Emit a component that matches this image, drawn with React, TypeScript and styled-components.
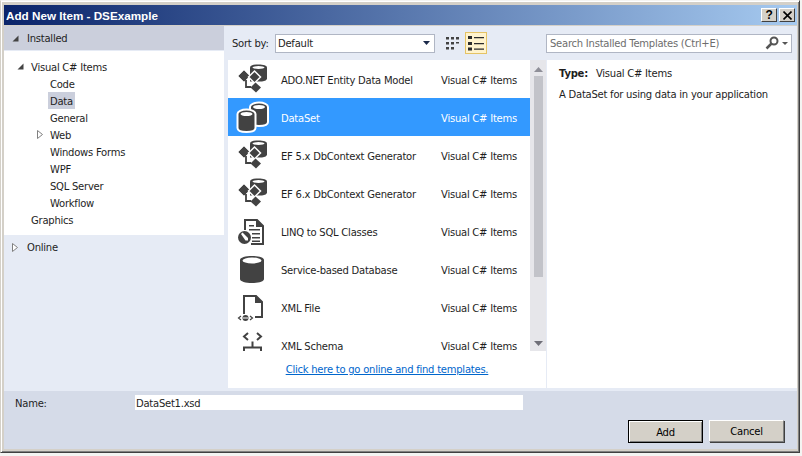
import { createGlobalStyle } from 'styled-components';
import styled from 'styled-components';

const GlobalStyle = createGlobalStyle`
  html, body {
    margin: 0;
    padding: 0;
    background: #f4f4f2;
  }
`;

const UI_FONT = `"DejaVu Sans", "Noto Sans", sans-serif`;

const ink = '#424242';

function EntityIcon() {
  return (
    <svg width="34" height="30" viewBox="-2 0 34 30">
      <path d="M12 3.500c0-2 3.500-3 8.500-3s8.500 1 8.500 3v11c0 1.500-2 2.500-5 3H12z" fill={ink} />
      <ellipse cx="20.500" cy="3.500" rx="6" ry="1.500" fill="#fff" />
      <path d="M6 6l6 6-6 6-6-6z" fill={ink} stroke="#fff" strokeWidth="0.600" />
      <path d="M8 16v7h5" fill="none" stroke={ink} strokeWidth="1.800" />
      <path d="M16.500 7l6 6-6 6-6-6z" fill={ink} stroke="#fff" strokeWidth="1.500" />
      <path d="M17.500 18.500l5.500 5-5 5-5.500-5z" fill={ink} />
    </svg>
  );
}

function DatabaseIcon() {
  return (
    <svg width="34" height="30" viewBox="-2 0 34 30">
      <path d="M2 6c0-2.500 5.500-4 12-4s12 1.500 12 4v19c0 2.500-5.500 4-12 4s-12-1.500-12-4z" fill={ink} />
      <ellipse cx="14" cy="6.500" rx="9.500" ry="3" fill="#fff" />
    </svg>
  );
}

function DataSetIcon() {
  return (
    <svg width="34" height="32" viewBox="0 0 34 32">
      <path d="M14 6c0-2.500 4-4.500 9-4.500s9 2 9 4.500v15c0 2.500-4 4-9 4s-9-1.500-9-4z" fill={ink} stroke="#fff" strokeWidth="2" />
      <ellipse cx="23" cy="6" rx="6" ry="2" fill="#fff" />
      <path d="M1.500 13c0-2.500 4-4.500 9-4.500s9 2 9 4.500v14c0 2.500-4 4-9 4s-9-1.500-9-4z" fill={ink} stroke="#fff" strokeWidth="2" />
      <ellipse cx="10.500" cy="13" rx="6" ry="2" fill="#fff" />
    </svg>
  );
}

function LinqIcon() {
  return (
    <svg width="34" height="30" viewBox="-2 0 34 30">
      <path d="M7 14V4h12l6 6v18H13" fill="none" stroke={ink} strokeWidth="2" />
      <path d="M18 3v8h8z" fill={ink} />
      <path d="M11 9h5v1.500h-5zM11 13h11v1.500H11zM14 17h8v1.500h-8zM14 21h8v1.500h-8zM14 24.500h8V26h-8z" fill={ink} />
      <circle cx="6.500" cy="21.500" r="6.500" fill={ink} />
      <path d="M3 18l1.500-1.500 5.500 5.500 0 2.500-2.500 0z" fill="#fff" />
    </svg>
  );
}

function XmlFileIcon() {
  return (
    <svg width="34" height="30" viewBox="-2 0 34 30">
      <path d="M6 22V4h12l6 6v15h-7" fill="none" stroke={ink} strokeWidth="2" />
      <path d="M17 3v8h8z" fill={ink} />
      <circle cx="7.500" cy="26" r="3" fill={ink} />
      <path d="M5 26h5" stroke="#fff" strokeWidth="1" />
      <path d="M3 24l-2.500 2L3 28M12 24l2.500 2-2.500 2" fill="none" stroke={ink} strokeWidth="1.200" />
    </svg>
  );
}

function XmlSchemaIcon() {
  return (
    <svg width="34" height="30" viewBox="-2 0 34 30">
      <path d="M10 3L6 6.500l4 3.500M19 3l4 3.500-4 3.500" fill="none" stroke={ink} strokeWidth="2" />
      <path d="M14.500 11.500v6M6 21v-3.500h17V21" fill="none" stroke={ink} strokeWidth="2" />
    </svg>
  );
}

const items = [
  { name: 'ADO.NET Entity Data Model', icon: <EntityIcon /> },
  { name: 'DataSet', icon: <DataSetIcon />, selected: true },
  { name: 'EF 5.x DbContext Generator', icon: <EntityIcon /> },
  { name: 'EF 6.x DbContext Generator', icon: <EntityIcon /> },
  { name: 'LINQ to SQL Classes', icon: <LinqIcon /> },
  { name: 'Service-based Database', icon: <DatabaseIcon /> },
  { name: 'XML File', icon: <XmlFileIcon /> },
  { name: 'XML Schema', icon: <XmlSchemaIcon /> },
];

const tree = [
  { label: 'Visual C# Items', depth: 0, arrow: 'open' },
  { label: 'Code', depth: 1 },
  { label: 'Data', depth: 1, active: true },
  { label: 'General', depth: 1 },
  { label: 'Web', depth: 1, arrow: 'closed' },
  { label: 'Windows Forms', depth: 1 },
  { label: 'WPF', depth: 1 },
  { label: 'SQL Server', depth: 1 },
  { label: 'Workflow', depth: 1 },
  { label: 'Graphics', depth: 0 },
];

function Arrow({ open }: { open: boolean }) {
  return open ? (
    <svg width="7" height="7" viewBox="0 0 7 7">
      <path d="M6.500 0.500v6h-6z" fill="#444" />
    </svg>
  ) : (
    <svg width="6" height="9" viewBox="0 0 6 9">
      <path d="M0.500 0.500l5 4-5 4z" fill="#fff" stroke="#808080" />
    </svg>
  );
}

export default function App() {
  return (
    <>
      <GlobalStyle />
      <Window>
        <TitleBar>
          <TitleText>Add New Item - DSExample</TitleText>
          <TitleButtons>
            <CaptionButton>?</CaptionButton>
            <CaptionButton>
              <svg width="9" height="9" viewBox="0 0 9 9">
                <path d="M0.500 0.500l8 8M8.500 0.500l-8 8" stroke="#000" strokeWidth="1.600" />
              </svg>
            </CaptionButton>
          </TitleButtons>
        </TitleBar>
        <Main>
          <LeftPanel>
            <SectionHeader $active>
              <ArrowSlot><Arrow open /></ArrowSlot>
              Installed
            </SectionHeader>
            <Tree>
              {tree.map((row) => (
                <TreeRow key={row.label} $depth={row.depth}>
                  <ArrowSlot>{row.arrow && <Arrow open={row.arrow === 'open'} />}</ArrowSlot>
                  <TreeLabel $active={row.active}>{row.label}</TreeLabel>
                </TreeRow>
              ))}
            </Tree>
            <SectionHeader>
              <ArrowSlot><Arrow open={false} /></ArrowSlot>
              Online
            </SectionHeader>
          </LeftPanel>
          <CenterPanel>
            <Toolbar>
              <SortLabel>Sort by:</SortLabel>
              <SortSelect>
                Default
                <svg width="7" height="4" viewBox="0 0 7 4">
                  <path d="M0 0h7L3.500 4z" fill="#1b2a4a" />
                </svg>
              </SortSelect>
              <ViewButton>
                <svg width="16" height="16" viewBox="0 0 16 16">
                  <path d="M1 2h3v2.500H1zM6 2h3v2.500H6zM11 2h3v2.500h-3zM1 7h3v2.500H1zM6 7h3v2.500H6zM11 7h3v1.500h-3zM1 12h3v2.500H1zM6 12h3v2.500H6z" fill={ink} />
                </svg>
              </ViewButton>
              <ViewButton $on>
                <svg width="18" height="16" viewBox="0 0 18 16">
                  <path d="M1 1h4v3H1zM1 7h4v3H1zM1 12.500h4v3H1zM7 2h10v1.200H7zM7 8h10v1.200H7zM7 13.500h10v1.200H7z" fill="#2b2b2b" />
                </svg>
              </ViewButton>
            </Toolbar>
            <ListArea>
              <ListScroller>
                <List>
                  {items.map((item) => (
                    <ItemRow key={item.name} $selected={item.selected}>
                      <ItemIcon>{item.icon}</ItemIcon>
                      <ItemName>{item.name}</ItemName>
                      <ItemType>Visual C# Items</ItemType>
                    </ItemRow>
                  ))}
                </List>
                <ScrollBar>
                  <svg width="9" height="5" viewBox="0 0 9 5">
                    <path d="M4.500 0l4.500 5H0z" fill="#8f8f98" />
                  </svg>
                  <ScrollThumb />
                  <svg width="9" height="5" viewBox="0 0 9 5">
                    <path d="M0 0h9L4.500 5z" fill="#6f6f78" />
                  </svg>
                </ScrollBar>
              </ListScroller>
              <OnlineLinkRow>
                <OnlineLink href="#">Click here to go online and find templates.</OnlineLink>
              </OnlineLinkRow>
            </ListArea>
          </CenterPanel>
          <RightPanel>
            <SearchRow>
              <SearchBox>
                <SearchText>Search Installed Templates (Ctrl+E)</SearchText>
                <svg width="14" height="14" viewBox="0 0 14 14">
                  <circle cx="9" cy="5" r="3.500" fill="none" stroke="#555" strokeWidth="2" />
                  <path d="M6.500 7.500L1.500 12.500" stroke="#555" strokeWidth="2.500" />
                </svg>
                <svg width="6" height="3" viewBox="0 0 6 3">
                  <path d="M0 0h6L3 3z" fill="#555" />
                </svg>
              </SearchBox>
            </SearchRow>
            <Details>
              <TypeLine>
                <TypeKey>Type:</TypeKey>
                <span>Visual C# Items</span>
              </TypeLine>
              <Description>A DataSet for using data in your application</Description>
            </Details>
          </RightPanel>
        </Main>
        <Footer>
          <NameRow>
            <NameLabel>Name:</NameLabel>
            <NameInput readOnly value="DataSet1.xsd" />
          </NameRow>
          <ButtonRow>
            <DialogButton $primary>Add</DialogButton>
            <DialogButton>Cancel</DialogButton>
          </ButtonRow>
        </Footer>
      </Window>
    </>
  );
}

const Window = styled.div`
  box-sizing: border-box;
  width: 800px;
  height: 453px;
  display: flex;
  flex-direction: column;
  background: #d4d0c8;
  border-top: 1px solid #f4f4f2;
  border-left: 1px solid #d4d0c8;
  border-right: 1px solid #404040;
  border-bottom: 1px solid #404040;
  box-shadow: inset 1px 1px 0 #fff, inset -1px -1px 0 #808080;
  padding: 4px 2px 3px 3px;
  font-family: ${UI_FONT};
  font-size: 10px;
  letter-spacing: -0.24px;
  color: #1e1e1e;
`;

const TitleBar = styled.div`
  height: 20px;
  flex: none;
  margin-bottom: 1px;
  display: flex;
  align-items: center;
  justify-content: space-between;
  padding: 0 2px;
  background: linear-gradient(90deg, #0a246a, #a6caf0);
`;

const TitleText = styled.div`
  font-family: "Liberation Sans", sans-serif;
  font-weight: bold;
  font-size: 11.700px;
  letter-spacing: 0;
  color: #fff;
`;

const TitleButtons = styled.div`
  display: flex;
  gap: 2px;
`;

const CaptionButton = styled.div`
  box-sizing: border-box;
  width: 16px;
  height: 14px;
  display: flex;
  align-items: center;
  justify-content: center;
  background: #d4d0c8;
  border: 1px solid;
  border-color: #fff #404040 #404040 #fff;
  font-family: "Liberation Sans", sans-serif;
  font-weight: bold;
  font-size: 12px;
  color: #000;
`;

const Main = styled.div`
  flex: 1;
  display: flex;
  background: #e6ebf5;
`;

const LeftPanel = styled.div`
  width: 220px;
  display: flex;
  flex-direction: column;
`;

const ArrowSlot = styled.div`
  box-sizing: border-box;
  width: 14px;
  flex: none;
  display: flex;
  align-items: center;
  justify-content: flex-end;
  padding-right: 5px;
`;

const SectionHeader = styled.div<{ $active?: boolean }>`
  height: 24px;
  display: flex;
  align-items: center;
  padding-left: 8px;
  background: ${(p) => (p.$active ? '#cbcfdc' : '#e6ebf5')};
  ${ArrowSlot} {
    width: 15px;
    justify-content: flex-start;
  }
`;

const Tree = styled.div`
  margin-top: 1px;
  padding: 7px 0;
  background: #fff;
`;

const TreeRow = styled.div<{ $depth: number }>`
  height: 17px;
  display: flex;
  align-items: center;
  padding-left: ${(p) => 11 + p.$depth * 19}px;
`;

const TreeLabel = styled.div<{ $active?: boolean }>`
  height: 17px;
  line-height: 19px;
  padding: 0 2px;
  background: ${(p) => (p.$active ? '#cbcfdc' : 'transparent')};
`;

const CenterPanel = styled.div`
  width: 318px;
  margin-left: 4px;
  display: flex;
  flex-direction: column;
`;

const Toolbar = styled.div`
  height: 34px;
  flex: none;
  display: flex;
  align-items: center;
  padding-left: 4px;
`;

const SortLabel = styled.div`
  width: 43px;
`;

const SortSelect = styled.div`
  box-sizing: border-box;
  width: 160px;
  height: 19px;
  display: flex;
  align-items: center;
  justify-content: space-between;
  padding: 0 4px 0 2px;
  margin-right: 7px;
  background: #fff;
  border: 1px solid #b0b6c4;
`;

const ViewButton = styled.div<{ $on?: boolean }>`
  box-sizing: border-box;
  width: 22px;
  height: 22px;
  margin-right: 1px;
  display: flex;
  align-items: center;
  justify-content: center;
  background: ${(p) => (p.$on ? '#fff3cd' : 'transparent')};
  border: 1px solid ${(p) => (p.$on ? '#e5c365' : 'transparent')};
`;

const ListArea = styled.div`
  flex: 1;
  display: flex;
  flex-direction: column;
  margin-bottom: 3px;
  background: #fff;
`;

const ListScroller = styled.div`
  height: 291px;
  display: flex;
  overflow: hidden;
`;

const List = styled.div`
  width: 302px;
  flex: none;
`;

const ItemRow = styled.div<{ $selected?: boolean }>`
  height: 38px;
  display: flex;
  align-items: center;
  background: ${(p) => (p.$selected ? '#3399ff' : 'transparent')};
  color: ${(p) => (p.$selected ? '#fff' : '#1e1e1e')};
`;

const ItemIcon = styled.div`
  width: 53px;
  flex: none;
  display: flex;
  justify-content: flex-start;
  padding-left: 8px;
  box-sizing: border-box;
`;

const ItemName = styled.div`
  width: 160px;
  flex: none;
  padding-top: 2px;
`;

const ItemType = styled.div`
  padding-top: 2px;
  white-space: nowrap;
`;

const ScrollBar = styled.div`
  flex: 1;
  display: flex;
  flex-direction: column;
  align-items: center;
  padding: 7px 0 5px;
  gap: 4px;
  justify-content: space-between;
  background: #e6e6ea;
`;

const ScrollThumb = styled.div`
  width: 9px;
  height: 201px;
  margin-bottom: auto;
  background: #c2c3c9;
`;

const OnlineLinkRow = styled.div`
  padding-top: 13px;
  text-align: center;
`;

const OnlineLink = styled.a`
  color: #0066cc;
`;

const RightPanel = styled.div`
  flex: 1;
  display: flex;
  flex-direction: column;
`;

const SearchRow = styled.div`
  height: 34px;
  flex: none;
  display: flex;
  align-items: center;
`;

const SearchBox = styled.div`
  box-sizing: border-box;
  width: 246px;
  height: 19px;
  display: flex;
  align-items: center;
  gap: 3px;
  padding: 0 3px;
  background: #fff;
  border: 1px solid #b0b6c4;
`;

const SearchText = styled.div`
  flex: 1;
  color: #6d6d6d;
`;

const Details = styled.div`
  flex: 1;
  margin-bottom: 3px;
  margin-left: 1px;
  padding: 5px 12px;
  background: #fff;
`;

const TypeLine = styled.div`
  display: flex;
  gap: 8px;
  line-height: 17px;
`;

const TypeKey = styled.span`
  font-weight: bold;
`;

const Description = styled.div`
  margin-top: 4px;
  line-height: 17px;
`;

const Footer = styled.div`
  height: 58px;
  flex: none;
  box-sizing: border-box;
  padding: 4px 13px 6px 11px;
  background: #d5dbe8;
`;

const NameRow = styled.div`
  display: flex;
  align-items: center;
`;

const NameLabel = styled.div`
  width: 120px;
  padding-top: 1px;
`;

const NameInput = styled.input`
  box-sizing: border-box;
  width: 388px;
  height: 15px;
  padding: 1px 1px 0;
  border: 0;
  outline: 0;
  background: #fff;
  font: inherit;
  letter-spacing: inherit;
  color: #1e1e1e;
`;

const ButtonRow = styled.div`
  display: flex;
  justify-content: flex-end;
  gap: 6px;
  margin-top: 10px;
`;

const DialogButton = styled.div<{ $primary?: boolean }>`
  box-sizing: border-box;
  width: 75px;
  height: ${(p) => (p.$primary ? 23 : 22)}px;
  display: flex;
  align-items: center;
  justify-content: center;
  padding-top: 1px;
  background: #d4d0c8;
  border: 1px solid;
  border-color: ${(p) => (p.$primary ? '#000' : '#fff #808080 #808080 #fff')};
  box-shadow: ${(p) => (p.$primary ? 'inset 1px 1px 0 #fff, inset -1px -1px 0 #808080' : '1px 1px 0 #404040')};
  color: #000;
`;
